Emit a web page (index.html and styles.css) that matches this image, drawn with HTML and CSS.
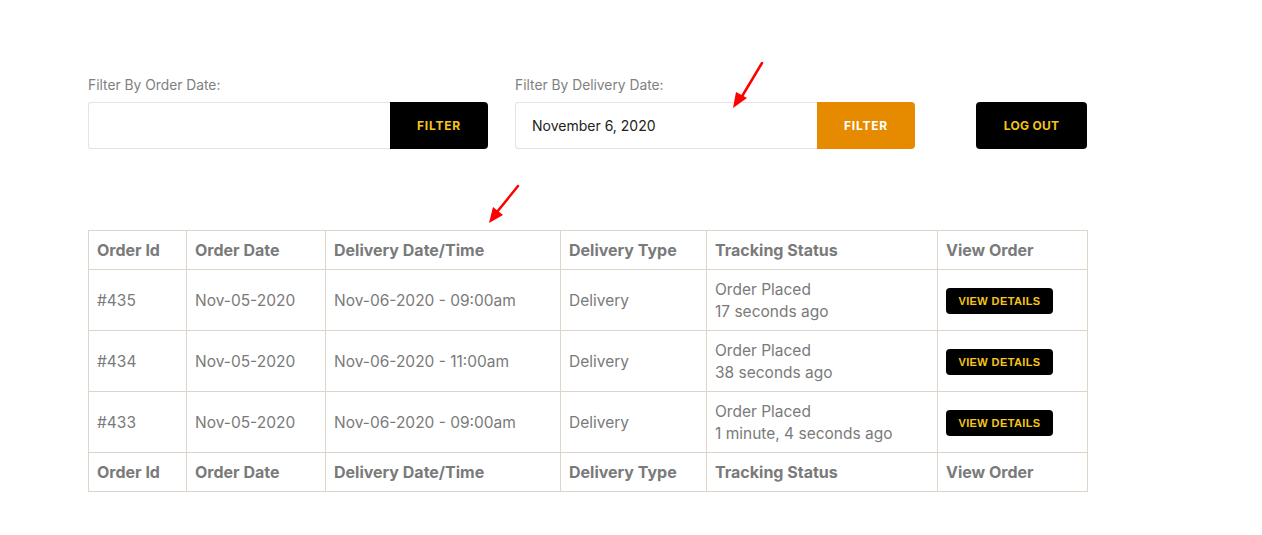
FILE: index.html
```html
<!DOCTYPE html>
<html>
<head>
<meta charset="utf-8">
<link rel="stylesheet" href="styles.css">
</head>
<body>
<div class="page">
  <div class="filters">
    <form class="filter">
      <label class="filter-label">Filter By Order Date:</label>
      <div class="filter-field">
        <input class="filter-input" type="text" value="">
        <button class="btn btn-dark" type="button">FILTER</button>
      </div>
    </form>
    <form class="filter">
      <label class="filter-label">Filter By Delivery Date:</label>
      <div class="filter-field">
        <input class="filter-input" type="text" value="November 6, 2020">
        <button class="btn btn-orange" type="button">FILTER</button>
      </div>
    </form>
    <div class="logout-wrap">
      <button class="btn btn-dark btn-logout" type="button">LOG OUT</button>
    </div>
  </div>

  <table class="orders">
    <colgroup>
      <col class="c1"><col class="c2"><col class="c3"><col class="c4"><col class="c5"><col class="c6">
    </colgroup>
    <thead>
      <tr><th>Order Id</th><th>Order Date</th><th>Delivery Date/Time</th><th>Delivery Type</th><th>Tracking Status</th><th>View Order</th></tr>
    </thead>
    <tbody>
      <tr><td>#435</td><td>Nov-05-2020</td><td>Nov-06-2020 - 09:00am</td><td>Delivery</td><td>Order Placed<br>17 seconds ago</td><td><a class="view-btn">VIEW DETAILS</a></td></tr>
      <tr><td>#434</td><td>Nov-05-2020</td><td>Nov-06-2020 - 11:00am</td><td>Delivery</td><td>Order Placed<br>38 seconds ago</td><td><a class="view-btn">VIEW DETAILS</a></td></tr>
      <tr><td>#433</td><td>Nov-05-2020</td><td>Nov-06-2020 - 09:00am</td><td>Delivery</td><td>Order Placed<br>1 minute, 4 seconds ago</td><td><a class="view-btn">VIEW DETAILS</a></td></tr>
    </tbody>
    <tfoot>
      <tr><th>Order Id</th><th>Order Date</th><th>Delivery Date/Time</th><th>Delivery Type</th><th>Tracking Status</th><th>View Order</th></tr>
    </tfoot>
  </table>

  <svg class="arrow arrow-1" width="40" height="50" viewBox="0 0 40 50">
    <line x1="35" y1="3" x2="14" y2="38" stroke="#ff0000" stroke-width="2.5" stroke-linecap="round"/>
    <polygon points="6,48 9,32 20,38" fill="#ff0000"/>
  </svg>
  <svg class="arrow arrow-2" width="40" height="45" viewBox="0 0 40 45">
    <line x1="35" y1="3" x2="14" y2="29" stroke="#ff0000" stroke-width="2.5" stroke-linecap="round"/>
    <polygon points="6,40 10,24 20,32" fill="#ff0000"/>
  </svg>
</div>
</body>
</html>
```

FILE: styles.css
```css
html, body {
  margin: 0;
  padding: 0;
  background: #ffffff;
}

.page {
  position: relative;
  padding: 75px 0 0 88px;
  font-family: Inter, "Liberation Sans", sans-serif;
  color: #7a7a7a;
}

.filters {
  display: flex;
  align-items: flex-end;
  margin-bottom: 81px;
}

.filter {
  width: 400px;
  margin: 0 27px 0 0;
  display: flex;
  flex-direction: column;
}

.filter-label {
  font-family: Inter, "Liberation Sans", sans-serif;
  font-size: 13.8px;
  line-height: 20px;
  color: #7f7f7f;
  margin-bottom: 7px;
}

.filter-field {
  display: flex;
  height: 47px;
}

.filter-input {
  flex: 1;
  min-width: 0;
  box-sizing: border-box;
  height: 47px;
  border: 1px solid #e3e3e3;
  border-right: none;
  border-radius: 3px 0 0 3px;
  padding: 0 16px;
  font-family: Inter, "Liberation Sans", sans-serif;
  font-size: 14px;
  color: #222222;
  outline: none;
}

.btn {
  border: none;
  font-family: Inter, "Liberation Sans", sans-serif;
  font-weight: 700;
  font-size: 12px;
  letter-spacing: 0.8px;
  cursor: pointer;
  padding: 0;
}

.filter-field .btn {
  width: 98px;
  height: 47px;
  border-radius: 0 4px 4px 0;
}

.btn-dark {
  background: #000000;
  color: #f5c518;
}

.btn-orange {
  background: #e68a00;
  color: #ffffff;
}

.logout-wrap {
  margin-left: 34px;
}

.btn-logout {
  width: 111px;
  height: 47px;
  border-radius: 4px;
  letter-spacing: 0.3px;
}

.orders {
  border-collapse: collapse;
  table-layout: fixed;
  width: 999px;
  border: 1px solid #ddd5c8;
  font-size: 16px;
  line-height: 22px;
}

.c1 { width: 98px; }
.c2 { width: 139px; }
.c3 { width: 235px; }
.c4 { width: 146px; }
.c5 { width: 231px; }
.c6 { width: 150px; }

.orders th,
.orders td {
  border: 1px solid #ddd5c8;
  padding: 8px 8px;
  text-align: left;
  vertical-align: middle;
  color: #7a7a7a;
}

.orders th {
  font-weight: 700;
}

.orders td {
  font-weight: 400;
  font-size: 15.5px;
  padding: 9px 8px 7px;
}

.view-btn {
  display: inline-block;
  width: 107px;
  height: 26px;
  line-height: 26px;
  text-align: center;
  background: #000000;
  color: #f5c518;
  border-radius: 4px;
  font-family: "Liberation Sans", Arial, sans-serif;
  font-weight: 700;
  font-size: 11px;
  letter-spacing: 0.4px;
  vertical-align: middle;
}

.arrow {
  position: absolute;
}

.arrow-1 {
  left: 727px;
  top: 60px;
}

.arrow-2 {
  left: 483px;
  top: 183px;
}
```
